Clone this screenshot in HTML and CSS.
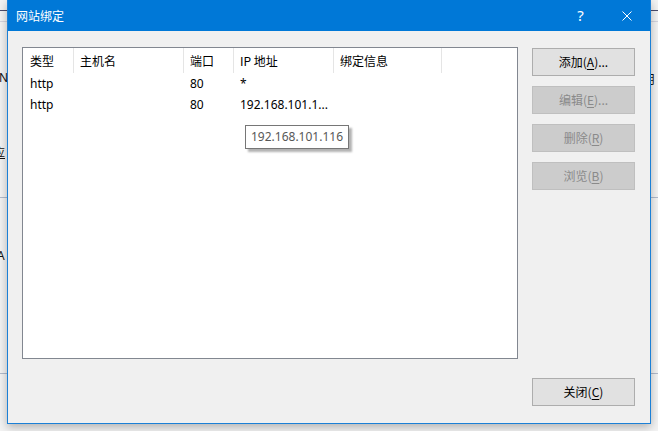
FILE: index.html
```html
<!DOCTYPE html>
<html lang="zh-CN">
<head>
<meta charset="utf-8">
<title>网站绑定</title>
<link rel="stylesheet" href="styles.css">
</head>
<body>
<div class="desktop">
  <div class="bgwin">
    <div class="bg-line bg-line-top"></div>
    <div class="bg-line bg-line-top2"></div>
    <div class="bg-line bg-line-mid"></div>
    <div class="bg-line bg-line-low"></div>
    <span class="bg-txt bg-n">N</span>
    <span class="bg-txt bg-ying">应</span>
    <span class="bg-txt bg-a">A</span>
    <span class="bg-txt bg-yong">用</span>
  </div>

  <div class="dialog">
    <div class="titlebar">
      <span class="title">网站绑定</span>
      <div class="caption-btns">
        <span class="cap-btn help">?</span>
        <span class="cap-btn close">
          <svg width="10" height="10" viewBox="0 0 10 10"><path d="M0.5 0.5 L9.5 9.5 M9.5 0.5 L0.5 9.5" stroke="#fff" stroke-width="1" fill="none"/></svg>
        </span>
      </div>
    </div>
    <div class="body">
      <div class="top">
        <div class="list">
          <div class="lrow head">
            <span class="c c1">类型</span>
            <span class="c c2">主机名</span>
            <span class="c c3">端口</span>
            <span class="c c4">IP 地址</span>
            <span class="c c5">绑定信息</span>
          </div>
          <div class="lrow">
            <span class="c c1">http</span>
            <span class="c c2"></span>
            <span class="c c3">80</span>
            <span class="c c4">*</span>
            <span class="c c5"></span>
          </div>
          <div class="lrow">
            <span class="c c1">http</span>
            <span class="c c2"></span>
            <span class="c c3">80</span>
            <span class="c c4">192.168.101.1...</span>
            <span class="c c5"></span>
          </div>
        </div>
        <div class="btns">
          <button class="btn">添加(<u>A</u>)...</button>
          <button class="btn disabled">编辑(<u>E</u>)...</button>
          <button class="btn disabled">删除(<u>R</u>)</button>
          <button class="btn disabled">浏览(<u>B</u>)</button>
        </div>
      </div>
      <div class="bottom">
        <button class="btn">关闭(<u>C</u>)</button>
      </div>
    </div>
  </div>

  <div class="tooltip">192.168.101.116</div>
</div>
</body>
</html>
```

FILE: styles.css
```css
* { box-sizing: border-box; }

html, body {
  margin: 0;
  padding: 0;
}

body {
  width: 658px;
  height: 431px;
  overflow: hidden;
  background: #f4f4f4;
  font-family: "Noto Sans", "Noto Sans CJK SC", sans-serif;
  font-size: 12px;
  color: #000;
}

.desktop {
  position: relative;
  width: 658px;
  height: 431px;
}

/* window behind the dialog */
.bgwin {
  position: absolute;
  inset: 0;
  background: #f3f3f3;
}

.bg-line {
  position: absolute;
  left: 0;
  right: 0;
  height: 1px;
}
.bg-line-top { top: 10px; background: #4c4c6c; }
.bg-line-top2 { top: 21px; background: #d4d4de; }
.bg-line-mid { top: 197px; background: #b1bacb; }
.bg-line-low { top: 373px; background: #b1bacb; }

.bg-txt {
  position: absolute;
  font-size: 12px;
  line-height: 14px;
  color: #111;
}
.bg-n { left: -1px; top: 71px; }
.bg-ying { left: -7px; top: 146px; text-decoration: underline; }
.bg-a { left: -3px; top: 249px; }
.bg-yong { left: 643px; top: 73px; }

/* dialog */
.dialog {
  position: absolute;
  left: 7px;
  top: 0;
  width: 644px;
  height: 424px;
  background: #f0f0f0;
  border: 1px solid #1c80d6;
  border-top: 0;
  box-shadow: 0 3px 9px rgba(0, 0, 0, 0.28);
  display: flex;
  flex-direction: column;
}

.titlebar {
  height: 31px;
  background: #0078d7;
  display: flex;
  align-items: center;
  color: #fff;
  flex: none;
}

.title {
  padding-left: 8px;
  font-family: "Noto Sans CJK SC", sans-serif;
  font-size: 12px;
  line-height: 31px;
}

.caption-btns {
  margin-left: auto;
  display: flex;
  height: 31px;
}

.cap-btn {
  width: 46px;
  height: 31px;
  display: flex;
  align-items: center;
  justify-content: center;
}

.help {
  font-family: "Noto Sans", sans-serif;
  font-size: 15px;
  font-weight: 400;
  padding-bottom: 2px;
  padding-right: 1px;
}

.body {
  flex: 1;
  padding: 16px 15px 0 14px;
  display: flex;
  flex-direction: column;
}

.top {
  display: flex;
  gap: 14px;
}

.list {
  width: 496px;
  height: 312px;
  background: #fff;
  border: 1px solid #828790;
  display: flex;
  flex-direction: column;
}

.lrow {
  display: flex;
  height: 21px;
  line-height: 21px;
}

.lrow.head {
  height: 25px;
  line-height: 25px;
}

.c {
  flex: none;
  padding-left: 6px;
  white-space: nowrap;
  overflow: hidden;
}
.c1 { width: 51px; padding-left: 7px; }
.c2 { width: 110px; }
.c3 { width: 50px; }
.c4 { width: 100px; }
.c5 { width: 108px; }

.head .c {
  border-right: 1px solid #e5e5e5;
  font-family: "Noto Sans CJK SC", sans-serif;
}

.btns {
  display: flex;
  flex-direction: column;
  gap: 10px;
  padding-top: 1px;
}

.btn {
  width: 103px;
  height: 28px;
  margin: 0;
  padding: 0;
  background: #e1e1e1;
  border: 1px solid #adadad;
  font-family: "Noto Sans CJK SC", sans-serif;
  font-size: 12px;
  color: #000;
  text-align: center;
  line-height: 26px;
}

.btn u {
  text-underline-offset: 2px;
}

.btn.disabled {
  background: #cccccc;
  border-color: #bfbfbf;
  color: #8a8a8a;
}

.bottom {
  display: flex;
  justify-content: flex-end;
  margin-top: 19px;
}

.tooltip {
  position: absolute;
  left: 245px;
  top: 125px;
  width: 104px;
  height: 24px;
  background: #fff;
  border: 1px solid #767676;
  color: #575757;
  padding-left: 5px;
  line-height: 22px;
  box-shadow: 3px 3px 2px rgba(0, 0, 0, 0.3);
  white-space: nowrap;
}
```
